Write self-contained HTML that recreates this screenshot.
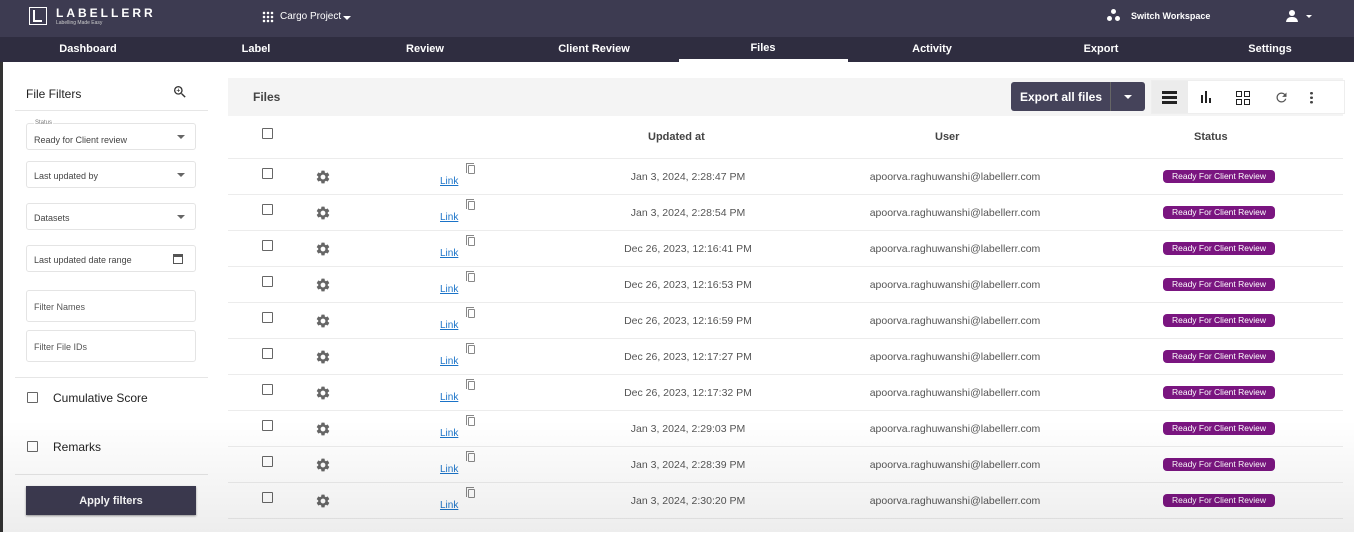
<!DOCTYPE html>
<html><head><style>
*{box-sizing:border-box;margin:0;padding:0}
body{width:1354px;height:532px;overflow:hidden;background:#fff;font-family:"Liberation Sans",sans-serif;position:relative;color:#333}
.top{position:absolute;left:0;top:0;width:1354px;height:37px;background:#3d3b51}
.nav{position:absolute;left:0;top:37px;width:1354px;height:25px;background:#2f2d40}
.nav span{position:absolute;top:6px;color:#fff;font-size:11px;font-weight:bold;transform:translateX(-50%)}
.edge{position:absolute;left:0;top:62px;width:3px;height:470px;background:#333}
.side{position:absolute;left:3px;top:62px;width:204px;height:470px}
.abs{position:absolute}
.fld{position:absolute;left:26px;width:170px;height:27px;border:1px solid #e4e4e4;border-radius:3px;font-size:9px;color:#444;padding:9px 0 0 7px}
.caret{position:absolute;right:10px;top:11px;border:4px solid transparent;border-top:4px solid #666;border-bottom:none}
.cb{position:absolute;width:11px;height:11px;border:1.5px solid #666;border-radius:1px}
.row{position:absolute;left:228px;width:1115px;height:36px;border-top:1px solid #ececec;font-size:10.5px;color:#555}
.row .c{position:absolute;top:12px;transform:translateX(-50%);white-space:nowrap}
.badge{position:absolute;left:935px;top:11px;width:112px;height:13px;background:#7a1580;color:#fff;font-size:8.5px;border-radius:4px;text-align:center;line-height:13px}
.link{position:absolute;left:212px;top:17px;color:#1a73c8;text-decoration:underline;font-size:10px}
.gear{position:absolute;left:87px;top:10px;width:16px;height:16px}
.copy{position:absolute;left:240px;top:6px;width:7px;height:9px;border:1px solid #888;border-radius:1px}
.copy:after{content:"";position:absolute;left:-3px;top:-3px;width:7px;height:9px;border-left:1px solid #888;border-top:1px solid #888}
</style></head><body>
<div class="top">
 <div class="abs" style="left:29px;top:7px;width:18px;height:18px;border:1.5px solid #fff"></div>
 <div class="abs" style="left:33px;top:10px;width:9px;height:12px;border-left:2px solid #fff;border-bottom:2px solid #fff"></div>
 <div class="abs" style="left:56px;top:6px;color:#fff;font-size:12px;font-weight:bold;letter-spacing:3px">LABELLERR</div>
 <div class="abs" style="left:56px;top:20px;color:#ccc;font-size:5px">Labelling Made Easy</div>
 <div class="abs" style="left:262px;top:11px;width:12px;height:12px;background:radial-gradient(circle,#fff 1.2px,transparent 1.4px) 0 0/4px 4px"></div>
 <div class="abs" style="left:280px;top:11px;color:#fff;font-size:10px">Cargo Project</div>
 <div class="abs" style="left:343px;top:16px;border:4px solid transparent;border-top:4px solid #fff;border-bottom:none"></div>
 <div class="abs" style="left:1111px;top:9px;width:5px;height:5px;border-radius:50%;background:#fff"></div>
 <div class="abs" style="left:1107px;top:16px;width:5px;height:5px;border-radius:50%;background:#fff"></div>
 <div class="abs" style="left:1115px;top:16px;width:5px;height:5px;border-radius:50%;background:#fff"></div>
 <div class="abs" style="left:1131px;top:11px;color:#fff;font-size:9px;font-weight:bold">Switch Workspace</div>
 <div class="abs" style="left:1289px;top:10px;width:6px;height:6px;border-radius:50%;background:#fff"></div>
 <div class="abs" style="left:1286px;top:17px;width:12px;height:5px;border-radius:5px 5px 0 0;background:#fff"></div>
 <div class="abs" style="left:1306px;top:15px;border:3.5px solid transparent;border-top:3.5px solid #fff;border-bottom:none"></div>
</div>
<div class="nav">
 <span style="left:88px">Dashboard</span><span style="left:256px">Label</span><span style="left:425px">Review</span><span style="left:594px">Client Review</span><span style="left:763px;top:5px">Files</span><span style="left:932px">Activity</span><span style="left:1101px">Export</span><span style="left:1270px">Settings</span>
 <div class="abs" style="left:679px;top:22px;width:169px;height:3px;background:#fff"></div>
</div>
<div class="edge"></div>
<div class="side">
 <div class="abs" style="left:23px;top:25px;font-size:12px;color:#222">File Filters</div>
 <svg class="abs" style="left:169px;top:22px" width="16" height="16" viewBox="0 0 24 24"><path fill="#333" d="M15.5 14h-.79l-.28-.27A6.47 6.47 0 0016 9.5 6.5 6.5 0 109.5 16c1.61 0 3.090-.59 4.23-1.57l.27.28v.79l5 4.99L20.49 19l-4.99-5zm-6 0C7.01 14 5 11.99 5 9.5S7.01 5 9.5 5 14 7.01 14 9.5 11.99 14 9.5 14z"/><path fill="#333" d="M12 10h-2v2H9v-2H7V9h2V7h1v2h2v1z"/></svg>
 <div class="abs" style="left:12px;top:48px;width:193px;height:1px;background:#e6e6e6"></div>
</div>
<div class="fld" style="top:123px;padding-top:11px">Ready for Client review<span class="abs" style="left:7px;top:-4px;font-size:6px;color:#777;background:#fff;padding:0 1px">Status</span><span class="caret"></span></div>
<div class="fld" style="top:161px">Last updated by<span class="caret"></span></div>
<div class="fld" style="top:203px">Datasets<span class="caret"></span></div>
<div class="fld" style="top:245px">Last updated date range<span class="abs" style="right:12px;top:8px;width:10px;height:10px;border:1.5px solid #555;border-top-width:3px"></span></div>
<div class="fld" style="top:290px;height:32px;padding-top:11px;color:#555">Filter Names</div>
<div class="fld" style="top:330px;height:32px;padding-top:11px;color:#555">Filter File IDs</div>
<div class="abs" style="left:15px;top:377px;width:193px;height:1px;background:#e6e6e6"></div>
<div class="cb" style="left:27px;top:392px"></div><div class="abs" style="left:53px;top:391px;font-size:12px;color:#222">Cumulative Score</div>
<div class="cb" style="left:27px;top:441px"></div><div class="abs" style="left:53px;top:440px;font-size:12px;color:#222">Remarks</div>
<div class="abs" style="left:15px;top:474px;width:193px;height:1px;background:#e6e6e6"></div>
<div class="abs" style="left:26px;top:486px;width:170px;height:29px;background:#3d3b51;color:#fff;font-size:11px;font-weight:bold;text-align:center;padding-top:9px;box-shadow:0 1px 2px #999">Apply filters</div>

<div class="abs" style="left:228px;top:78px;width:1115px;height:38px;background:#f4f4f4"></div>
<div class="abs" style="left:253px;top:90px;font-size:12px;font-weight:bold;color:#444">Files</div>
<div class="abs" style="left:1011px;top:82px;width:134px;height:29px;background:#45435a;border-radius:3px"></div>
<div class="abs" style="left:1020px;top:90px;color:#fff;font-size:12px;font-weight:bold">Export all files</div>
<div class="abs" style="left:1110px;top:82px;width:1px;height:29px;background:#666"></div>
<div class="abs" style="left:1124px;top:95px;border:4px solid transparent;border-top:4px solid #fff;border-bottom:none"></div>
<div class="abs" style="left:1151px;top:80px;width:194px;height:34px;background:#fff;border:1px solid #eee"></div>
<div class="abs" style="left:1152px;top:81px;width:36px;height:32px;background:#ececec"></div>
<div class="abs" style="left:1162px;top:91px;width:15px;height:13px;border-top:3px solid #222;border-bottom:3px solid #222"></div>
<div class="abs" style="left:1162px;top:96px;width:15px;height:3px;background:#222"></div>
<div class="abs" style="left:1201px;top:95px;width:2px;height:8px;background:#222"></div>
<div class="abs" style="left:1205px;top:91px;width:2px;height:12px;background:#222"></div>
<div class="abs" style="left:1209px;top:98px;width:2px;height:5px;background:#222"></div>
<div class="abs" style="left:1236px;top:91px;width:6px;height:6px;border:1.5px solid #222"></div>
<div class="abs" style="left:1244px;top:91px;width:6px;height:6px;border:1.5px solid #222"></div>
<div class="abs" style="left:1236px;top:99px;width:6px;height:6px;border:1.5px solid #222"></div>
<div class="abs" style="left:1244px;top:99px;width:6px;height:6px;border:1.5px solid #222"></div>
<svg class="abs" style="left:1274px;top:90px" width="15" height="15" viewBox="0 0 24 24"><path fill="#555" d="M17.65 6.35A7.958 7.958 0 0012 4c-4.42 0-7.99 3.58-7.99 8s3.57 8 7.99 8c3.73 0 6.84-2.55 7.73-6h-2.08A5.99 5.99 0 0112 18c-3.31 0-6-2.69-6-6s2.69-6 6-6c1.66 0 3.14.69 4.22 1.78L13 11h7V4l-2.35 2.35z"/></svg>
<div class="abs" style="left:1310px;top:91px;width:3px;height:13px;background:radial-gradient(circle,#444 1.3px,transparent 1.5px) 0 0/3px 4.5px"></div>

<div class="cb" style="left:262px;top:128px"></div>
<div class="abs" style="left:648px;top:131px;font-size:11px;font-weight:bold;color:#444">Updated at</div>
<div class="abs" style="left:935px;top:131px;font-size:11px;font-weight:bold;color:#444">User</div>
<div class="abs" style="left:1194px;top:131px;font-size:11px;font-weight:bold;color:#444">Status</div>

<div id="rows"></div>
<script>
var d=["Jan 3, 2024, 2:28:47 PM","Jan 3, 2024, 2:28:54 PM","Dec 26, 2023, 12:16:41 PM","Dec 26, 2023, 12:16:53 PM","Dec 26, 2023, 12:16:59 PM","Dec 26, 2023, 12:17:27 PM","Dec 26, 2023, 12:17:32 PM","Jan 3, 2024, 2:29:03 PM","Jan 3, 2024, 2:28:39 PM","Jan 3, 2024, 2:30:20 PM"];
var g='<svg class="gear" viewBox="0 0 24 24"><path fill="#666" d="M19.14 12.94c.04-.3.06-.61.06-.94 0-.32-.02-.64-.07-.94l2.03-1.58a.49.49 0 00.12-.61l-1.92-3.32a.488.488 0 00-.59-.22l-2.39.96c-.5-.38-1.03-.7-1.62-.94l-.36-2.54a.484.484 0 00-.48-.41h-3.84c-.24 0-.43.17-.47.41l-.36 2.54c-.59.24-1.13.57-1.62.94l-2.39-.96c-.22-.08-.47 0-.59.22L2.74 8.87c-.12.21-.08.47.12.61l2.03 1.58c-.05.3-.09.63-.09.94s.02.64.07.94l-2.03 1.58a.49.49 0 00-.12.61l1.92 3.32c.12.22.37.29.59.22l2.39-.96c.5.38 1.03.7 1.62.94l.36 2.54c.05.24.24.41.48.41h3.84c.24 0 .44-.17.47-.41l.36-2.54c.59-.24 1.13-.56 1.62-.94l2.39.96c.22.08.47 0 .59-.22l1.92-3.32c.12-.22.07-.47-.12-.61l-2.01-1.58zM12 15.6c-1.98 0-3.6-1.62-3.6-3.6s1.62-3.6 3.6-3.6 3.6 1.62 3.6 3.6-1.62 3.6-3.6 3.6z"/></svg>';
var h="";
d.forEach(function(t,i){var y=158+i*36;
h+='<div class="row" style="top:'+y+'px"><div class="cb" style="left:34px;top:9px"></div>'+g+'<span class="link">Link</span><span class="copy"></span><span class="c" style="left:460px">'+t+'</span><span class="c" style="left:727px">apoorva.raghuwanshi@labellerr.com</span><span class="badge">Ready For Client Review</span></div>';});
h+='<div class="row" style="top:518px"></div>';
document.getElementById("rows").innerHTML=h;
</script>
<div class="abs" style="left:0;top:420px;width:1354px;height:112px;background:linear-gradient(rgba(0,0,0,0),rgba(0,0,0,0.07));pointer-events:none"></div>
</body></html>
